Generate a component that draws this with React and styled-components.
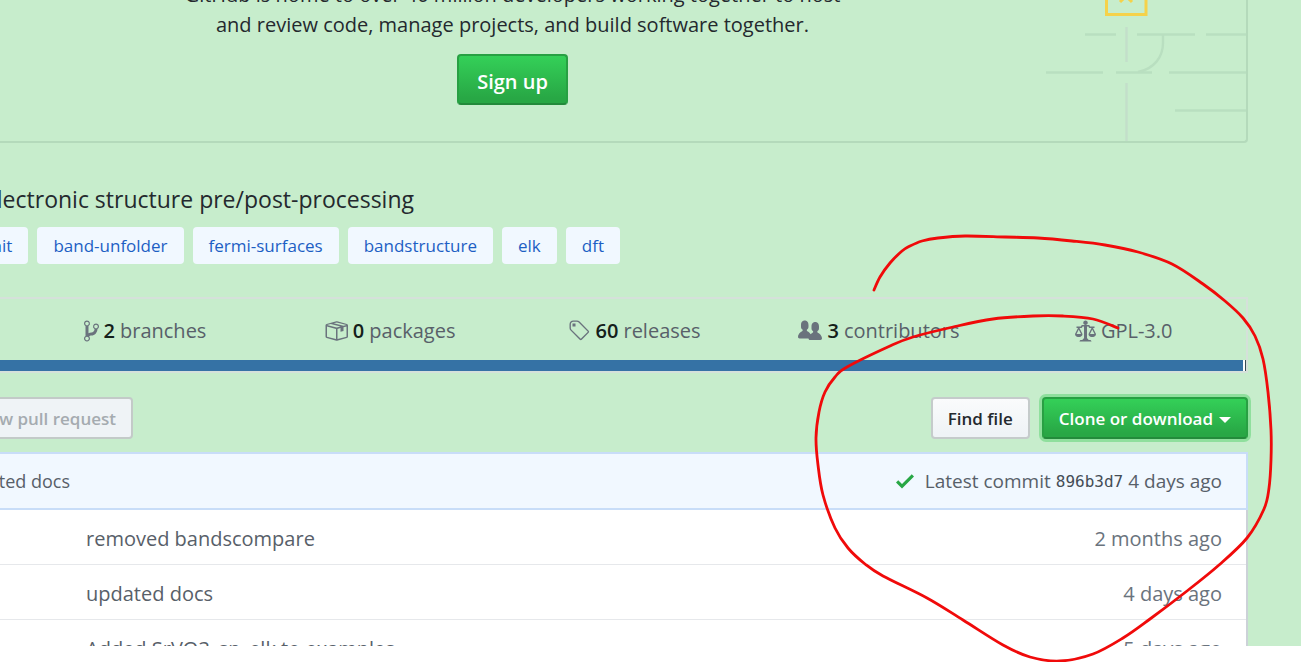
import React from 'react';
import styled, { createGlobalStyle, css } from 'styled-components';

const GlobalStyle = createGlobalStyle`
  *, *::before, *::after {
    box-sizing: border-box;
  }

  body {
    margin: 0;
    background-color: #fff;
    font-family: 'Open Sans', 'Noto Sans', sans-serif;
    color: #24292e;
  }
`;

const Page = styled.div`
  position: relative;
  overflow: hidden;
  height: 100vh;
`;

const Viewport = styled.main`
  height: calc(100vh - 16px);
  overflow: hidden;
  background-color: #c7edcc;
`;

/* the repository column is scrolled so that its left part is off the page */
const Container = styled.div`
  margin: 0 53px 0 -224px;
`;

const Hero = styled.section`
  position: relative;
  height: 143px;
  padding: 0 0 36px 3px;
  display: flex;
  flex-direction: column;
  align-items: center;
  justify-content: flex-end;
  border: solid #b4dabb;
  border-width: 0 2px 2px 0;
  border-radius: 0 0 4px 0;
`;

const HeroText = styled.p`
  flex-shrink: 0;
  margin: 0 0 14px;
  font-size: 20px;
  line-height: 30px;
  text-align: center;
  white-space: nowrap;
`;

const HeroArt = styled.svg`
  position: absolute;
  right: 0;
  bottom: 0;
`;

const greenButton = css`
  color: #fff;
  border-color: #28a043;
  border-bottom-color: #238a3b;
  background-image: linear-gradient(#34d058, #28a745 90%);
`;

const Button = styled.button`
  flex-shrink: 0;
  height: 42px;
  padding: 0 15px;
  display: flex;
  align-items: center;
  gap: 6px;
  font-family: inherit;
  font-size: 17px;
  font-weight: 600;
  white-space: nowrap;
  color: #24292e;
  border: 2px solid #c5cbcb;
  border-radius: 4px;
  background-image: linear-gradient(#fafbfc, #eff3f6 90%);

  ${({ $green }) => $green && greenButton}

  ${({ $focused }) =>
    $focused &&
    css`
      box-shadow: 0 0 0 3px #8fdf9d;
    `}

  &:disabled {
    color: #a5abb0;
    border-color: #c3cac8;
    background: #eff3f6;
  }
`;

const SignUpButton = styled(Button)`
  height: 51px;
  padding: 4px 18px 0;
  font-size: 20px;
`;

const Caret = styled.span`
  margin-top: 4px;
  border: solid transparent;
  border-width: 6px 6px 0;
  border-top-color: #fff;
`;

const Description = styled.h1`
  width: 638px;
  margin: 40px 0 12px;
  display: flex;
  justify-content: flex-end;
  font-size: 23px;
  font-weight: 400;
  line-height: 32px;
  white-space: nowrap;
`;

const Topics = styled.nav`
  width: 844px;
  display: flex;
  justify-content: flex-end;
  gap: 9px;
`;

const Topic = styled.a`
  padding: 0 16px;
  font-size: 17px;
  line-height: 37px;
  color: #1d5fc4;
  text-decoration: none;
  border-radius: 4px;
  background-color: #f1f8ff;
`;

const Summary = styled.section`
  margin-top: 33px;
  border: 2px solid #d5e1da;
`;

const Stats = styled.div`
  height: 61px;
  padding-top: 2px;
  display: grid;
  grid-template-columns: repeat(6, 1fr);
  align-items: center;
`;

const Stat = styled.a`
  grid-column: ${({ $column }) => $column};
  display: flex;
  align-items: center;
  justify-content: center;
  gap: 5px;
  font-size: 20px;
  color: #586069;
  text-decoration: none;

  svg {
    fill: #6a737d;
  }

  strong {
    font-weight: 600;
    color: #14201a;
  }
`;

const LanguageBar = styled.div`
  height: 11px;
  display: flex;
  gap: 2px;
  background-color: #fff;
`;

const Language = styled.span`
  flex: ${({ $grow }) => ($grow ? '1' : '0 0 1px')};
  background-color: ${({ $color }) => $color};
`;

const Toolbar = styled.div`
  margin: 24px 0 13px;
  display: flex;
  justify-content: space-between;
`;

const PullRequest = styled.div`
  width: 357px;
  display: flex;
  justify-content: flex-end;
`;

const Actions = styled.div`
  display: flex;
  gap: 12px;
`;

const LatestCommit = styled.div`
  height: 58px;
  padding-right: 24px;
  display: flex;
  align-items: center;
  justify-content: space-between;
  font-size: 19px;
  color: #586069;
  border: 2px solid #c8ddf8;
  background-color: #f1f8ff;
`;

const CommitTitle = styled.span`
  width: 292px;
  font-size: 18px;
  text-align: right;
`;

const CommitInfo = styled.span`
  display: flex;
  align-items: center;
  gap: 5px;

  svg {
    margin-right: 6px;
    fill: #28a745;
  }
`;

const Hash = styled.a`
  font-family: 'DejaVu Sans Mono', monospace;
  font-size: 16px;
  color: #444d56;
  text-decoration: none;
`;

const Files = styled.table`
  width: 100%;
  border-collapse: separate;
  border-spacing: 0;
  border-right: 2px solid #ccd2d8;
  background-color: #fff;
`;

const Cell = styled.td`
  height: 55px;
  padding: 2px 24px 0 0;
  font-size: 20px;
  text-align: ${({ $age }) => ($age ? 'right' : 'left')};
  color: ${({ $age }) => ($age ? '#6a737d' : '#586069')};
  border-bottom: 1px solid #e6e8eb;
`;

const NameCell = styled(Cell)`
  width: 310px;
`;

const Drawing = styled.svg`
  position: absolute;
  top: 0;
  right: 0;
  pointer-events: none;
`;

const icons = {
  branch: {
    width: 10,
    d: 'M10 5c0-1.11-.89-2-2-2a1.993 1.993 0 0 0-1 3.72v.3c-.02.52-.23.98-.63 1.38-.4.4-.86.61-1.38.63-.83.02-1.48.16-2 .45V4.72a1.993 1.993 0 0 0-1-3.72C.88 1 0 1.89 0 3a2 2 0 0 0 1 1.72v6.56c-.59.35-1 .99-1 1.72 0 1.11.89 2 2 2 1.11 0 2-.89 2-2 0-.53-.2-1-.53-1.36.09-.06.48-.41.59-.47.25-.11.56-.17.94-.17 1.05-.05 1.95-.45 2.75-1.25S8.95 7.77 9 6.73h-.02C9.59 6.37 10 5.73 10 5zM2 1.8c.66 0 1.2.55 1.2 1.2 0 .65-.55 1.2-1.2 1.2C1.35 4.2.8 3.65.8 3c0-.65.55-1.2 1.2-1.2zm0 12.41c-.66 0-1.2-.55-1.2-1.2 0-.65.55-1.2 1.2-1.2.65 0 1.2.55 1.2 1.2 0 .65-.55 1.2-1.2 1.2zm6-8c-.66 0-1.2-.55-1.2-1.2 0-.65.55-1.2 1.2-1.2.65 0 1.2.55 1.2 1.2 0 .65-.55 1.2-1.2 1.2z',
  },
  package: {
    width: 16,
    d: 'M1 4.27v7.47c0 .45.3.84.75.97l6.5 1.73c.16.05.34.05.5 0l6.5-1.73c.45-.13.75-.52.75-.97V4.27c0-.45-.3-.84-.75-.97l-6.5-1.74a1.4 1.4 0 0 0-.5 0L1.75 3.3c-.45.13-.75.52-.75.97zm7 9.09l-6-1.59V5l6 1.61v6.75zM2 4l2.5-.67L11 5.06l-2.5.67L2 4zm13 7.77l-6 1.59V6.61l2-.55V8.5l2-.53V5.53L15 5v6.77zm-2-7.24L6.5 2.8l2-.53L15 4l-2 .53z',
  },
  tag: {
    width: 15,
    d: 'M7.73 1.73C7.26 1.26 6.62 1 5.96 1H3.5C2.13 1 1 2.13 1 3.5v2.47c0 .66.27 1.3.73 1.77l6.06 6.06c.39.39 1.02.39 1.41 0l4.59-4.59a.996.996 0 0 0 0-1.41L7.73 1.73zM2.38 7.09c-.31-.3-.47-.7-.47-1.13V3.5c0-.88.72-1.59 1.59-1.59h2.47c.42 0 .83.16 1.13.47l6.14 6.13-4.73 4.73-6.13-6.15zM3.01 3h2v2H3V3h.01z',
  },
  people: {
    width: 16,
    d: 'M16 12.999c0 .439-.45 1-1 1H7.995c-.539 0-.994-.447-.995-.999H1c-.54 0-1-.561-1-1 0-2.634 3-4 3-4s.229-.409 0-1c-.841-.621-1.058-.59-1-3 .058-2.419 1.367-3 2.5-3s2.442.58 2.5 3c.058 2.41-.159 2.379-1 3-.229.59 0 1 0 1s1.549.711 2.42 2.088C9.196 9.369 10 8.999 10 8.999s.229-.409 0-1c-.841-.62-1.058-.59-1-3 .058-2.419 1.367-3 2.5-3s2.437.581 2.495 3c.059 2.41-.158 2.38-1 3-.229.59 0 1 0 1s3.005 1.366 3.005 4',
  },
  law: {
    width: 14,
    d: 'M7 4c-.83 0-1.5-.67-1.5-1.5S6.17 1 7 1s1.5.67 1.5 1.5S7.83 4 7 4zm7 6c0 1.11-.89 2-2 2h-1c-1.11 0-2-.89-2-2l2-4h-1c-.55 0-1-.45-1-1H8v8c.42 0 1 .45 1 1h1c.42 0 1 .45 1 1H3c0-.55.58-1 1-1h1c0-.55.58-1 1-1h.03L6 5H5c0 .55-.45 1-1 1H3l2 4c0 1.11-.89 2-2 2H2c-1.11 0-2-.89-2-2l2-4H1V5h3c0-.55.45-1 1-1h4c.55 0 1 .45 1 1h3v1h-1l2 4zM2.5 7L1 10h3L2.5 7zM13 10l-1.5-3-1.5 3h3z',
  },
  check: { width: 12, d: 'M12 5l-8 8-4-4 1.5-1.5L4 10l6.5-6.5L12 5z' },
};

const Icon = ({ name }) => (
  <svg
    width={icons[name].width * 1.5}
    height="24"
    viewBox={`0 0 ${icons[name].width} 16`}
    aria-hidden="true"
  >
    <path fillRule="evenodd" d={icons[name].d} />
  </svg>
);

const topics = ['abinit', 'band-unfolder', 'fermi-surfaces', 'bandstructure', 'elk', 'dft'];

const stats = [
  { icon: 'branch', count: 2, label: 'branches' },
  { icon: 'package', count: 0, label: 'packages' },
  { icon: 'tag', count: 60, label: 'releases' },
  { icon: 'people', count: 3, label: 'contributors' },
  { icon: 'law', label: 'GPL-3.0' },
];

const files = [
  { message: 'removed bandscompare', age: '2 months ago' },
  { message: 'updated docs', age: '4 days ago' },
  { message: 'Added SrVO3_sp_elk to examples', age: '5 days ago' },
];

const strokePoints = [
  [874, 290], [880, 277], [890, 263], [902, 251], [910, 246], [922, 241], [938, 238],
  [965, 236], [1005, 237], [1038, 238], [1072, 241], [1105, 245], [1138, 252], [1172, 264],
  [1203, 284], [1225, 301], [1243, 318], [1255, 336], [1263, 359], [1268, 392], [1271, 430],
  [1271, 460], [1269, 488], [1264, 509], [1247, 538], [1219, 565], [1187, 591], [1150, 619],
  [1123, 638], [1093, 654], [1060, 661], [1030, 657], [1003, 645], [963, 620], [927, 598],
  [883, 576], [865, 564], [848, 548], [835, 528], [823, 495], [818, 465], [816, 438],
  [819, 412], [825, 392], [835, 377], [847, 367], [890, 346], [913, 337], [953, 327],
  [993, 319], [1033, 316], [1063, 316], [1093, 319], [1118, 328],
];

// Catmull-Rom curve through the points, written as cubic segments
const smoothPath = (points) =>
  points.slice(1).reduce((d, end, i) => {
    const start = points[i];
    const before = points[i - 1] || start;
    const after = points[i + 2] || end;
    const c1 = start.map((v, k) => v + (end[k] - before[k]) / 6);
    const c2 = end.map((v, k) => v - (after[k] - start[k]) / 6);
    return `${d}C${c1} ${c2} ${end}`;
  }, `M${points[0]}`);

const App = () => (
  <Page>
    <GlobalStyle />
    <Viewport>
      <Container>
        <Hero>
          <HeroArt width="208" height="141" viewBox="1038 0 208 141" fill="none" aria-hidden="true">
            <g stroke="#b9dfc0" strokeWidth="2.4">
              <path d="M1085 34.5h31M1137 34.5h58M1206 34.5h40M1046 72.5h57M1116 72.5h36M1169 72.5h77M1175 110.5h71" />
              <path d="M1163 35v8c0 14-9 26-25 29" />
              <path stroke="#c3dfca" d="M1126.5 27v35M1126.5 83v58" />
            </g>
            <path stroke="#f5d24a" strokeWidth="3" d="M1106.5-2v16.5h39.5V-2" />
            <path stroke="#f5d24a" strokeWidth="3" d="M1120 2l4-4M1128-2l4 4" />
          </HeroArt>
          <HeroText>
            GitHub is home to over 40 million developers working together to host
            <br />
            and review code, manage projects, and build software together.
          </HeroText>
          <SignUpButton type="button" $green>
            Sign up
          </SignUpButton>
        </Hero>
        <Description>A Python library for electronic structure pre/post-processing</Description>
        <Topics>
          {topics.map((topic) => (
            <Topic key={topic} href="#">
              {topic}
            </Topic>
          ))}
        </Topics>
        <Summary>
          <Stats>
            {stats.map(({ icon, count, label }, index) => (
              <Stat key={label} href="#" $column={index + 2}>
                <Icon name={icon} />
                {count !== undefined && <strong>{count}</strong>}
                <span>{label}</span>
              </Stat>
            ))}
          </Stats>
          <LanguageBar>
            <Language $grow $color="#3572a5" />
            <Language $color="#384d54" />
          </LanguageBar>
        </Summary>
        <Toolbar>
          <PullRequest>
            <Button type="button" disabled>
              New pull request
            </Button>
          </PullRequest>
          <Actions>
            <Button type="button">Find file</Button>
            <Button type="button" $green $focused>
              Clone or download
              <Caret />
            </Button>
          </Actions>
        </Toolbar>
        <LatestCommit>
          <CommitTitle>updated docs</CommitTitle>
          <CommitInfo>
            <Icon name="check" />
            <span>Latest commit</span>
            <Hash href="#">896b3d7</Hash>
            <span>4 days ago</span>
          </CommitInfo>
        </LatestCommit>
        <Files>
          <tbody>
            {files.map(({ message, age }) => (
              <tr key={message}>
                <NameCell />
                <Cell>{message}</Cell>
                <Cell $age>{age}</Cell>
              </tr>
            ))}
          </tbody>
        </Files>
      </Container>
    </Viewport>
    <Drawing width="501" height="662" viewBox="800 0 501 662" fill="none" aria-hidden="true">
      <path
        d={smoothPath(strokePoints)}
        stroke="#f00a0a"
        strokeWidth="2.8"
        strokeLinecap="round"
      />
    </Drawing>
  </Page>
);

export default App;
